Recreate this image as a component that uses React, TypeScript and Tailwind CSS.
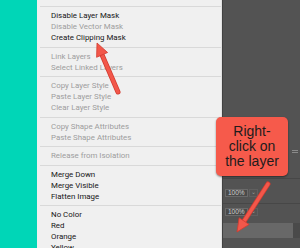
type Item = { label: string; off?: boolean }

const groups: Item[][] = [
  [{ label: 'Disable Layer Mask' }, { label: 'Disable Vector Mask', off: true }, { label: 'Create Clipping Mask' }],
  [{ label: 'Link Layers', off: true }, { label: 'Select Linked Layers', off: true }],
  [{ label: 'Copy Layer Style', off: true }, { label: 'Paste Layer Style', off: true }, { label: 'Clear Layer Style', off: true }],
  [{ label: 'Copy Shape Attributes', off: true }, { label: 'Paste Shape Attributes', off: true }],
  [{ label: 'Release from Isolation', off: true }],
  [{ label: 'Merge Down' }, { label: 'Merge Visible' }, { label: 'Flatten Image' }],
  [{ label: 'No Color' }, { label: 'Red' }, { label: 'Orange' }, { label: 'Yellow' }],
]

function Separator() {
  return (
    <div className="pt-[3.5px] pb-[3px] pl-[3px]">
      <div className="h-px bg-[#d9d9d9]" />
    </div>
  )
}

function PercentField({ value }: { value: string }) {
  return (
    <div className="flex items-center gap-[1px]">
      <div className="w-[23px] h-[8px] bg-[#4a4a4a] border border-[#6a6a6a] text-[6.5px] leading-[6px] text-[#cfcfcf] pl-[2px]">
        {value}
      </div>
      <div className="w-[9px] h-[8px] border border-[#5f5f5f] text-[6px] leading-[5px] text-[#9a9a9a] text-center">⌄</div>
    </div>
  )
}

function Arrow({ line, head }: { line: [number, number, number, number]; head: string }) {
  return (
    <g>
      <line x1={line[0]} y1={line[1]} x2={line[2]} y2={line[3]} stroke="#d23a2f" strokeWidth={5} strokeLinecap="round" />
      <line x1={line[0]} y1={line[1]} x2={line[2]} y2={line[3]} stroke="#f2574a" strokeWidth={3.5} strokeLinecap="round" />
      <polygon points={head} fill="#f2574a" stroke="#d23a2f" strokeWidth={0.8} strokeLinejoin="round" />
    </g>
  )
}

export default function App() {
  return (
    <div className="relative w-[300px] h-[248px] overflow-hidden flex font-['Liberation_Sans',Arial,sans-serif]">
      <div className="w-[37px] bg-[#00d6b7]" />

      <div className="w-[185px] bg-[#f0f0f0] border-r border-[#e2e2e2] pt-[2.5px] font-['Roboto',Arial,sans-serif]">
        {groups.map((group, gi) => (
          <div key={gi}>
            <Separator />
            {group.map((item) => (
              <div
                key={item.label}
                className={`h-[11px] pl-[14px] text-[7.9px] leading-[11px] whitespace-nowrap ${item.off ? 'text-[#9d9d9d]' : 'text-[#161616]'}`}
              >
                {item.label}
              </div>
            ))}
          </div>
        ))}
      </div>

      <div className="flex-1 bg-[#535353] border-l border-[#424242] flex flex-col">
        <div className="h-[146px]" />
        <div className="h-[33px] border-b border-[#474747] flex justify-end pr-[2px] pt-[4px]">
          <div className="w-[6px] flex flex-col gap-[1px]">
            <div className="h-px bg-[#8a8a8a]" />
            <div className="h-px bg-[#8a8a8a]" />
          </div>
        </div>
        <div className="h-[25px] border-b border-[#474747] pl-[2px] pt-[10px]">
          <PercentField value="100%" />
        </div>
        <div className="h-[19px] pl-[2px] pt-[4px]">
          <PercentField value="100%" />
        </div>
        <div className="h-[15px] flex">
          <div className="w-[70px] bg-[#686868]" />
          <div className="flex-1 bg-[#4a4a4a]" />
        </div>
      </div>

      <div className="absolute left-[216px] top-[117px] w-[72px] h-[59px] rounded-[5px] bg-[#f65a4b] shadow-[0_1px_2px_rgba(0,0,0,0.45)] flex flex-col items-center justify-center text-[14px] leading-[15px] text-[#221c1c]">
        <span>Right-</span>
        <span>click on</span>
        <span>the layer</span>
      </div>

      <svg className="absolute inset-0 pointer-events-none" width={300} height={248} viewBox="0 0 300 248">
        <Arrow line={[118, 92, 102.1, 54.9]} head="97,43 107.6,52.5 96.6,57.3" />
        <Arrow line={[268, 184, 244.1, 221.1]} head="237,232 249.1,224.4 239.1,217.8" />
      </svg>
    </div>
  )
}
